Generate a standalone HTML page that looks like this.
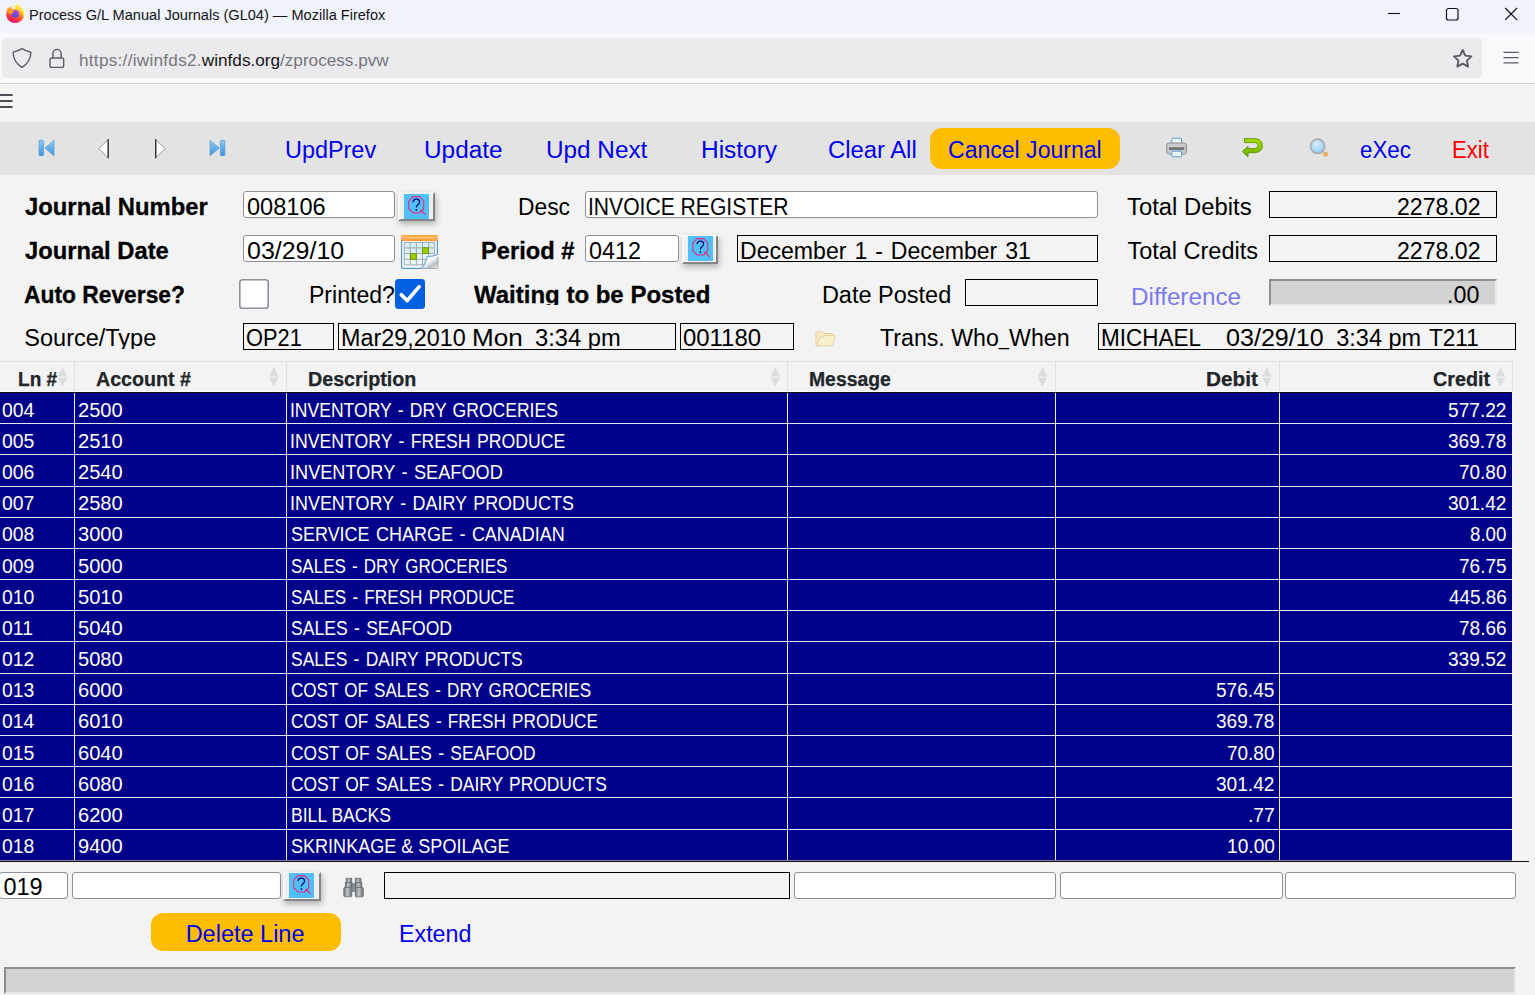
<!DOCTYPE html>
<html lang="en"><head><meta charset="utf-8"><title>Process G/L Manual Journals (GL04)</title>
<style>
*{box-sizing:border-box;margin:0;padding:0}
html,body{width:1535px;height:995px;overflow:hidden;background:#f3f3f3}
body{position:relative;font-family:"Liberation Sans",sans-serif}
.a{position:absolute}
.t{position:absolute;white-space:pre;line-height:1;font-kerning:normal;transform-origin:0 0}
.inp{position:absolute;background:#fff;border:1px solid #8f8f9d;border-radius:3px}
.ro{position:absolute;border:1px solid #000}
.inset{position:absolute;background:#d3d3d3;border:2px solid;border-color:#8e8e8e #e9e9e9 #e9e9e9 #8e8e8e}
.btn{position:absolute;background:#ffbd00;border-radius:12px}
.lk{position:absolute;background:#efefef;border:2px solid;border-color:#f6f6f6 #858585 #858585 #f6f6f6;box-shadow:1px 3px 6px rgba(0,0,0,.28)}
.vl{position:absolute;width:1px}
.hl{position:absolute;height:1px;left:0}
svg{position:absolute;overflow:visible}
</style></head>
<body>
<div class="a" style="left:0px;top:0px;width:1535px;height:33px;background:#f0f3fb"></div>
<div class="a" style="left:0px;top:33px;width:1535px;height:50px;background:#f9f9fb"></div>
<div class="a" style="left:0px;top:83px;width:1535px;height:1px;background:#cfcfd4"></div>
<div class="a" style="left:2px;top:38px;width:1480px;height:40px;background:#ebebed;border-radius:4px"></div>
<div class="a" style="left:0px;top:122px;width:1535px;height:52.5px;background:#e3e3e3"></div>
<div class="btn" style="left:930px;top:128px;width:190px;height:41px;"></div>
<div class="inp" style="left:243px;top:191px;width:152px;height:27px;"></div>
<div class="inp" style="left:585px;top:191px;width:513px;height:27px;"></div>
<div class="ro" style="left:1269px;top:191px;width:228px;height:27px;"></div>
<div class="inp" style="left:243px;top:235px;width:152px;height:27px;"></div>
<div class="inp" style="left:585px;top:235px;width:94px;height:27px;"></div>
<div class="ro" style="left:737px;top:235px;width:361px;height:27px;"></div>
<div class="ro" style="left:1269px;top:235px;width:228px;height:27px;"></div>
<svg style="left:239px;top:279px" width="30" height="30" viewBox="0 0 30 30"><rect x=".8" y=".8" width="28.400" height="28.400" rx="2.800" fill="#fff" stroke="#8f8f9d" stroke-width="1.600"/></svg>
<div class="a" style="left:395px;top:279px;width:30px;height:30px;background:#0060df;border-radius:3.500px"></div>
<div class="ro" style="left:965px;top:279px;width:133px;height:27px;"></div>
<div class="inset" style="left:1269px;top:279px;width:228px;height:27px;"></div>
<div class="ro" style="left:243px;top:323px;width:91px;height:27px;"></div>
<div class="ro" style="left:338px;top:323px;width:338px;height:27px;"></div>
<div class="ro" style="left:680px;top:323px;width:114px;height:27px;"></div>
<div class="ro" style="left:1098px;top:323px;width:418px;height:27px;"></div>
<div class="hl" style="left:0px;top:361px;width:1512px;height:1px;background:#dee2e6"></div>
<div class="vl" style="left:74px;top:361px;width:1px;height:31px;background:#dee2e6"></div>
<div class="vl" style="left:286px;top:361px;width:1px;height:31px;background:#dee2e6"></div>
<div class="vl" style="left:787px;top:361px;width:1px;height:31px;background:#dee2e6"></div>
<div class="vl" style="left:1055px;top:361px;width:1px;height:31px;background:#dee2e6"></div>
<div class="vl" style="left:1279px;top:361px;width:1px;height:31px;background:#dee2e6"></div>
<div class="vl" style="left:1512px;top:361px;width:1px;height:31px;background:#dee2e6"></div>
<div class="a" style="left:0px;top:393px;width:1512px;height:467px;background:#00008b"></div>
<div class="hl" style="left:0px;top:391px;width:1512px;height:1px;background:#fbfbfb"></div>
<div class="hl" style="left:0px;top:392px;width:1512px;height:1px;background:#101010"></div>
<div class="hl" style="left:0px;top:423px;width:1512px;height:1px;background:#e4e4f4"></div>
<div class="hl" style="left:0px;top:454px;width:1512px;height:1px;background:#e4e4f4"></div>
<div class="hl" style="left:0px;top:486px;width:1512px;height:1px;background:#e4e4f4"></div>
<div class="hl" style="left:0px;top:517px;width:1512px;height:1px;background:#e4e4f4"></div>
<div class="hl" style="left:0px;top:548px;width:1512px;height:1px;background:#e4e4f4"></div>
<div class="hl" style="left:0px;top:579px;width:1512px;height:1px;background:#e4e4f4"></div>
<div class="hl" style="left:0px;top:610px;width:1512px;height:1px;background:#e4e4f4"></div>
<div class="hl" style="left:0px;top:641px;width:1512px;height:1px;background:#e4e4f4"></div>
<div class="hl" style="left:0px;top:673px;width:1512px;height:1px;background:#e4e4f4"></div>
<div class="hl" style="left:0px;top:704px;width:1512px;height:1px;background:#e4e4f4"></div>
<div class="hl" style="left:0px;top:735px;width:1512px;height:1px;background:#e4e4f4"></div>
<div class="hl" style="left:0px;top:766px;width:1512px;height:1px;background:#e4e4f4"></div>
<div class="hl" style="left:0px;top:797px;width:1512px;height:1px;background:#e4e4f4"></div>
<div class="hl" style="left:0px;top:829px;width:1512px;height:1px;background:#e4e4f4"></div>
<div class="vl" style="left:74px;top:393px;width:1px;height:467px;background:#eeeef8"></div>
<div class="vl" style="left:286px;top:393px;width:1px;height:467px;background:#eeeef8"></div>
<div class="vl" style="left:787px;top:393px;width:1px;height:467px;background:#eeeef8"></div>
<div class="vl" style="left:1055px;top:393px;width:1px;height:467px;background:#eeeef8"></div>
<div class="vl" style="left:1279px;top:393px;width:1px;height:467px;background:#eeeef8"></div>
<div class="hl" style="left:0px;top:860px;width:1512px;height:1px;background:#7d7da0"></div>
<div class="hl" style="left:0px;top:861px;width:1529px;height:1px;background:#111"></div>
<div class="inp" style="left:-1px;top:872px;width:69px;height:27px;"></div>
<div class="inp" style="left:72px;top:872px;width:209px;height:27px;"></div>
<div class="ro" style="left:384px;top:872px;width:406px;height:27px;"></div>
<div class="inp" style="left:794px;top:872px;width:262px;height:27px;"></div>
<div class="inp" style="left:1060px;top:872px;width:223px;height:27px;"></div>
<div class="inp" style="left:1285px;top:872px;width:231px;height:27px;"></div>
<div class="btn" style="left:151px;top:913px;width:190px;height:38px;"></div>
<div class="inset" style="left:4px;top:967px;width:1512px;height:27px;"></div>
<svg style="left:0px;top:0px" width="1535" height="995" viewBox="0 0 1535 995">
<defs>
<linearGradient id="ffo" x1="0.75" y1="0.050" x2="0.35" y2="1"><stop offset="0" stop-color="#fff04a"/><stop offset="0.30" stop-color="#ffb020"/><stop offset="0.62" stop-color="#ff4f33"/><stop offset="1" stop-color="#e6006c"/></linearGradient>
<linearGradient id="ffp" x1="0.6" y1="0" x2="0.4" y2="1"><stop offset="0" stop-color="#b838ee"/><stop offset="0.5" stop-color="#7a55f0"/><stop offset="1" stop-color="#4840c8"/></linearGradient>
<linearGradient id="nb" x1="0" y1="0" x2="0" y2="1"><stop offset="0" stop-color="#8fc9f2"/><stop offset="1" stop-color="#3f93dc"/></linearGradient>
<linearGradient id="gr" x1="0" y1="0" x2="0" y2="1"><stop offset="0" stop-color="#a6d800"/><stop offset="1" stop-color="#6fae00"/></linearGradient>
<radialGradient id="gl" cx="0.4" cy="0.35" r="0.7"><stop offset="0" stop-color="#d9f0fd"/><stop offset="1" stop-color="#8fcbf2"/></radialGradient>
<linearGradient id="bn" x1="0" y1="0" x2="1" y2="0"><stop offset="0" stop-color="#6d7072"/><stop offset="0.45" stop-color="#c3c6c8"/><stop offset="1" stop-color="#66696b"/></linearGradient>
</defs>
<!-- firefox logo -->
<circle cx="15.100" cy="14.200" r="8.900" fill="url(#ffo)"/>
<path d="M11.300 8.600L12.600 4.600l2.700 1.800v2.800z" fill="#f0f3fb"/>
<path d="M15 8.800c.2-2.300 1.400-4 2.700-5 .9 2.200 3.800 3.400 5.300 6.200 1.300 2.400 1.300 5 .5 7-.5-4-2.500-6.500-5-7.500-1.200-.5-2.500-.7-3.500-.7z" fill="#ffe63c"/>
<path d="M6.700 11.200c.2-2 1-3.300 1.800-3.900.3.800 1 1.400 1.600 1.600.2-.6.700-1 1.200-.9 0 1.100.5 1.900 1.200 2.300L9 12.200z" fill="#ff9d1e"/>
<circle cx="15.200" cy="13.900" r="3.800" fill="url(#ffp)"/>
<path d="M7.800 11.700c2.100-.9 4.700-1 7.100.1-1.400.4-2.600 1-3.400 2.100-1.100-.6-2.600-1.100-3.700-2.200z" fill="#ffae1f"/>
<!-- window controls -->
<path d="M1388 13.500h12" stroke="#111" stroke-width="1.100" fill="none"/>
<rect x="1446.500" y="8.500" width="11.500" height="11.500" rx="2" fill="none" stroke="#111" stroke-width="1.200"/>
<path d="M1505.200 8l11.800 11.800M1517 8l-11.800 11.800" stroke="#111" stroke-width="1.200" fill="none"/>
<!-- shield -->
<path d="M22 48.700c2.600 1.700 5.400 2.800 8.400 3.300.3 0 .5.300.5.600-.2 6.600-3.400 11.600-8.900 14.700-5.500-3.100-8.700-8.100-8.900-14.700 0-.3.200-.6.500-.6 3-.5 5.800-1.600 8.400-3.300z" fill="none" stroke="#5b5b66" stroke-width="1.400" stroke-linejoin="round"/>
<!-- lock -->
<rect x="50" y="58" width="13.700" height="9.400" rx="2" fill="none" stroke="#5b5b66" stroke-width="1.400"/>
<path d="M52.900 58v-4.300a4.100 4.300 0 0 1 8.200 0V58" fill="none" stroke="#5b5b66" stroke-width="1.400"/>
<!-- star -->
<path d="M1462.700 50l2.600 5.600 6.100.8-4.500 4.200 1.200 6-5.400-3-5.400 3 1.200-6-4.500-4.200 6.100-.8z" fill="none" stroke="#5b5b66" stroke-width="1.900" stroke-linejoin="round"/>
<!-- hamburger (browser) -->
<path d="M1503.500 52.400h15.200M1503.500 57.600h15.200M1503.500 62.800h15.200" stroke="#5b5b66" stroke-width="1.300" fill="none"/>
<!-- page hamburger -->
<path d="M0 95h12.600M0 101h12.600M0 107.100h12.600" stroke="#15151f" stroke-width="1.500" fill="none"/>
<!-- nav: first -->
<rect x="39" y="140.300" width="4.600" height="15.400" rx="1" fill="url(#nb)" stroke="#4a97d8" stroke-width=".6"/>
<path d="M54 140.300v15.400l-9-7.700z" fill="url(#nb)" stroke="#4a97d8" stroke-width=".6" stroke-linejoin="round"/>
<!-- nav: prev -->
<path d="M108 139.800v17.800l-9.300-8.900z" fill="#fdfdfd" stroke="#8e8e8e" stroke-width=".9" stroke-linejoin="round"/>
<path d="M108.200 139.600v18.200" stroke="#262626" stroke-width="1.200" fill="none" stroke-linecap="round"/>
<!-- nav: next -->
<path d="M155.900 139.800v17.800l9.300-8.900z" fill="#fdfdfd" stroke="#8e8e8e" stroke-width=".9" stroke-linejoin="round"/>
<path d="M155.700 139.600v18.200" stroke="#262626" stroke-width="1.200" fill="none" stroke-linecap="round"/>
<!-- nav: last -->
<path d="M210 140.300v15.400l9.300-7.700z" fill="url(#nb)" stroke="#4a97d8" stroke-width=".6" stroke-linejoin="round"/>
<rect x="220.300" y="140.300" width="4.600" height="15.400" rx="1" fill="url(#nb)" stroke="#4a97d8" stroke-width=".6"/>
<!-- printer -->
<rect x="1171.800" y="138.200" width="9.800" height="6" rx=".8" fill="#eef6fd" stroke="#5b9bd8" stroke-width="1"/>
<rect x="1166.800" y="143" width="19.600" height="11" rx="2" fill="#c9cbcd" stroke="#8b8e91" stroke-width="1"/>
<rect x="1169" y="147.300" width="15.200" height="2.600" fill="#6e7275"/>
<rect x="1171.800" y="151.200" width="9.800" height="5.600" rx=".8" fill="#eef6fd" stroke="#5b9bd8" stroke-width="1"/>
<!-- green return arrow -->
<path d="M1244.500 138.600h10c4.600 0 8 2.900 8 7 0 4.200-3.400 7.100-8 7.100h-6.500v4.200l-5.700-5.400 5.700-5.200v2.200h6.300c2.200 0 3.700-1.200 3.700-3s-1.500-2.900-3.700-2.900h-9.800z" fill="url(#gr)" stroke="#5d9700" stroke-width=".9" stroke-linejoin="round"/>
<!-- magnifier -->
<path d="M1322.800 151.400l2.600 2.600" stroke="#c9ccd0" stroke-width="2.600" stroke-linecap="round"/><circle cx="1325.700" cy="154.300" r="2" fill="#f0b253" stroke="#d99a3c" stroke-width=".5"/>
<circle cx="1317.600" cy="146.300" r="7.100" fill="url(#gl)" stroke="#a9adb2" stroke-width="1.700"/>
<!-- folder (faded) -->
<g opacity=".62"><path d="M816 345.800v-13c0-.6.400-1 1-1h5.200l1.400 1.700h8.200c.6 0 1 .4 1 1v2.300" fill="#fbe9a8" stroke="#e2b86c" stroke-width="1"/>
<path d="M816.300 345.800l3.600-8.600h3.400l1.300-1.600h9.600c.7 0 1.100.6.900 1.200l-2.600 8.200c-.1.500-.5.800-1 .8z" fill="#fdf0b4" stroke="#e2b86c" stroke-width="1" stroke-linejoin="round"/></g>
<!-- binoculars -->
<g stroke="#6a6d6f" stroke-width=".8">
<rect x="346.200" y="878.300" width="5.600" height="4.600" fill="url(#bn)"/><rect x="345.300" y="882.600" width="6.500" height="5" fill="url(#bn)"/><rect x="343.800" y="887.400" width="8" height="9.400" rx="1" fill="url(#bn)"/>
<rect x="355.300" y="878.300" width="5.600" height="4.600" fill="url(#bn)"/><rect x="355.300" y="882.600" width="6.500" height="5" fill="url(#bn)"/><rect x="355.300" y="887.400" width="8" height="9.400" rx="1" fill="url(#bn)"/>
<rect x="351.800" y="883.800" width="3.500" height="7.400" fill="#8a8d8f"/>
</g>
<!-- checkbox tick -->
<path d="M401.300 294.700l5.900 5.900 12-14" fill="none" stroke="#fff" stroke-width="3.700" stroke-linecap="round" stroke-linejoin="round"/>
<path d="M57.7 376.400l4.800-9.400 4.800 9.400zM57.7 377.800l4.800 8.800 4.800-8.800z" fill="#dcdcdc"/>
<path d="M268.95 376.400l4.800-9.400 4.800 9.400zM268.95 377.800l4.800 8.800 4.800-8.800z" fill="#dcdcdc"/>
<path d="M770.45 376.400l4.800-9.400 4.800 9.400zM770.45 377.800l4.800 8.800 4.800-8.800z" fill="#dcdcdc"/>
<path d="M1037.7 376.400l4.800-9.400 4.800 9.400zM1037.7 377.800l4.800 8.800 4.800-8.800z" fill="#dcdcdc"/>
<path d="M1262.2 376.400l4.800-9.400 4.800 9.400zM1262.2 377.800l4.800 8.800 4.800-8.800z" fill="#dcdcdc"/>
<path d="M1495.7 376.400l4.800-9.400 4.800 9.400zM1495.7 377.800l4.800 8.800 4.800-8.800z" fill="#dcdcdc"/>
</svg>
<div class="lk" style="left:398px;top:192px;width:37px;height:29px"></div>
<svg style="left:404px;top:193.6px" width="25" height="25" viewBox="0 0 25 25"><rect width="25" height="25" fill="#50c0f8"/><path d="M9 2.600h6.400l4.300 4.300v7.800l-4.300 4.300H9l-4.200-4.300V6.900z" fill="none" stroke="#e8287e" stroke-width="1.100"/><path d="M17.600 17.200l4 3.600" stroke="#e8287e" stroke-width="1.200"/><circle cx="17.400" cy="16.900" r="1.100" fill="#e8287e"/><path d="M9.100 8.300c0-2 1.400-3.200 3.300-3.200s3.200 1.100 3.200 2.800c0 1.500-.9 2.200-1.900 3-.9.700-1.400 1.300-1.400 2.700" fill="none" stroke="#06067c" stroke-width="1.300"/><rect x="11.600" y="15.300" width="1.500" height="1.600" fill="#06067c"/></svg>
<div class="lk" style="left:682px;top:234.5px;width:36px;height:29.0px"></div>
<svg style="left:688px;top:236.2px" width="25" height="25" viewBox="0 0 25 25"><rect width="25" height="25" fill="#50c0f8"/><path d="M9 2.600h6.400l4.300 4.300v7.800l-4.300 4.300H9l-4.200-4.300V6.900z" fill="none" stroke="#e8287e" stroke-width="1.100"/><path d="M17.600 17.200l4 3.600" stroke="#e8287e" stroke-width="1.200"/><circle cx="17.400" cy="16.900" r="1.100" fill="#e8287e"/><path d="M9.100 8.300c0-2 1.400-3.200 3.300-3.200s3.200 1.100 3.200 2.800c0 1.500-.9 2.200-1.900 3-.9.700-1.400 1.300-1.400 2.700" fill="none" stroke="#06067c" stroke-width="1.300"/><rect x="11.600" y="15.300" width="1.500" height="1.600" fill="#06067c"/></svg>
<div class="lk" style="left:283px;top:871.5px;width:37.5px;height:29.0px"></div>
<svg style="left:288.8px;top:873px" width="25" height="25" viewBox="0 0 25 25"><rect width="25" height="25" fill="#50c0f8"/><path d="M9 2.600h6.400l4.300 4.300v7.800l-4.300 4.300H9l-4.200-4.300V6.900z" fill="none" stroke="#e8287e" stroke-width="1.100"/><path d="M17.600 17.200l4 3.600" stroke="#e8287e" stroke-width="1.200"/><circle cx="17.400" cy="16.900" r="1.100" fill="#e8287e"/><path d="M9.100 8.300c0-2 1.400-3.200 3.300-3.200s3.200 1.100 3.200 2.800c0 1.500-.9 2.200-1.900 3-.9.700-1.400 1.300-1.400 2.700" fill="none" stroke="#06067c" stroke-width="1.300"/><rect x="11.600" y="15.300" width="1.500" height="1.600" fill="#06067c"/></svg>
<svg style="left:401px;top:235px" width="37" height="34" viewBox="0 0 37 34"><defs><linearGradient id="co" x1="0" y1="0" x2="0" y2="1"><stop offset="0" stop-color="#ff9a22"/><stop offset="0.35" stop-color="#ffc27a"/><stop offset="1" stop-color="#ff9320"/></linearGradient><linearGradient id="cc" x1="0.25" y1="0.1" x2="0.9" y2="0.95"><stop offset="0" stop-color="#ffffff"/><stop offset="0.45" stop-color="#f4f6f8"/><stop offset="0.75" stop-color="#b9bdc1"/><stop offset="1" stop-color="#e4e6e8"/></linearGradient></defs><rect x=".6" y="2" width="35.800" height="31.400" rx="1.800" fill="#fff" stroke="#4f9ad0" stroke-width="1.200"/><rect x="0" y="0" width="37" height="6" rx="1.400" fill="url(#co)"/><rect x="3.200" y="7.400" width="30.500" height="22.500" fill="#d6efff"/><rect x="3.200" y="18.600" width="30.500" height="11.300" fill="#e9f7ff"/><path d="M3.200 7.400h30.500v22.500H3.200zM3.200 12.900h30.500M3.200 18.600h30.500M3.200 24.300h30.500M9.200 7.400v22.500M15.400 7.400v22.500M21.500 7.400v22.500M27.700 7.400v22.500" fill="none" stroke="#a3a6aa" stroke-width="1"/><rect x="21.600" y="12.700" width="5.800" height="5.800" fill="#9ccc00" stroke="#6c9c00" stroke-width=".9"/><rect x="9.500" y="18.600" width="5.800" height="5.800" fill="#9ccc00" stroke="#6c9c00" stroke-width=".9"/><path d="M37 19c-3.500 2.600-7.500 2.400-10.800 2.600-1.200 4.500-2.600 9-6 12.100h15.300a1.500 1.500 0 0 0 1.500-1.500z" fill="url(#cc)"/><path d="M37 19c-3.500 2.600-7.500 2.400-10.800 2.600-1.200 4.500-2.600 9-6 12.100" fill="none" stroke="#6fa8d8" stroke-width="1.100"/><path d="M22 33.500h13.500a1.500 1.500 0 0 0 1.500-1.500v-10" fill="none" stroke="#a9a9a9" stroke-width="1"/></svg>
<span class="t" style="left:29.02px;top:6.66px;font-size:15.4px;color:#15141a;transform:scaleX(0.9460);">Process G/L Manual Journals (GL04) — Mozilla Firefox</span>
<span class="t" style="left:78.74px;top:52.07px;font-size:17.4px;color:#76767e;transform:scaleX(0.9859);"><span style="letter-spacing:.28px">https://iwinfds2.</span><span style="color:#15141a">winfds.org</span>/zprocess.pvw</span>
<span class="t" style="left:285.06px;top:139.11px;font-size:23.5px;color:#0000ee;transform:scaleX(0.9964);">UpdPrev</span>
<span class="t" style="left:424.23px;top:139.11px;font-size:23.5px;color:#0000ee;transform:scaleX(1.0364);">Update</span>
<span class="t" style="left:546.14px;top:139.11px;font-size:23.5px;color:#0000ee;transform:scaleX(1.0345);">Upd Next</span>
<span class="t" style="left:701.17px;top:139.11px;font-size:23.5px;color:#0000ee;transform:scaleX(1.0402);">History</span>
<span class="t" style="left:827.97px;top:139.11px;font-size:23.5px;color:#0000ee;transform:scaleX(1.0133);">Clear All</span>
<span class="t" style="left:947.90px;top:139.11px;font-size:23.5px;color:#0000ee;transform:scaleX(0.9803);">Cancel Journal</span>
<span class="t" style="left:1360.27px;top:139.11px;font-size:23.5px;color:#0000ee;transform:scaleX(0.9510);">eXec</span>
<span class="t" style="left:1451.97px;top:139.11px;font-size:23.5px;color:#ff0000;transform:scaleX(0.9389);">Exit</span>
<span class="t" style="left:25.00px;top:196.06px;font-size:23.5px;color:#000;font-weight:700;-webkit-text-stroke:0.3px;transform:scaleX(1.0140);">Journal Number</span>
<span class="t" style="left:246.95px;top:195.61px;font-size:23.5px;color:#000;transform:scaleX(1.0029);">008106</span>
<span class="t" style="left:518.03px;top:195.61px;font-size:23.5px;color:#000;transform:scaleX(0.9709);">Desc</span>
<span class="t" style="left:588.37px;top:195.61px;font-size:23.5px;color:#000;transform:scaleX(0.8978);">INVOICE REGISTER</span>
<span class="t" style="left:1127.44px;top:195.61px;font-size:23.5px;color:#000;transform:scaleX(1.0148);">Total Debits</span>
<span class="t" style="left:1397.18px;top:195.61px;font-size:23.5px;color:#000;transform:scaleX(0.9829);">2278.02</span>
<span class="t" style="left:25.03px;top:240.06px;font-size:23.5px;color:#000;font-weight:700;-webkit-text-stroke:0.3px;transform:scaleX(1.0099);">Journal Date</span>
<span class="t" style="left:246.60px;top:239.61px;font-size:23.5px;color:#000;transform:scaleX(1.0630);">03/29/10</span>
<span class="t" style="left:480.66px;top:240.06px;font-size:23.5px;color:#000;font-weight:700;-webkit-text-stroke:0.3px;transform:scaleX(1.0065);">Period #</span>
<span class="t" style="left:588.69px;top:239.61px;font-size:23.5px;color:#000;transform:scaleX(0.9930);">0412</span>
<span class="t" style="left:739.76px;top:239.61px;font-size:23.5px;color:#000;transform:scaleX(0.9816);word-spacing:1.6px;">December 1 - December 31</span>
<span class="t" style="left:1127.42px;top:239.61px;font-size:23.5px;color:#000;">Total Credits</span>
<span class="t" style="left:1397.18px;top:239.61px;font-size:23.5px;color:#000;transform:scaleX(0.9829);">2278.02</span>
<span class="t" style="left:24.48px;top:284.06px;font-size:23.5px;color:#000;font-weight:700;-webkit-text-stroke:0.3px;transform:scaleX(0.9707);">Auto Reverse?</span>
<span class="t" style="left:309.26px;top:283.61px;font-size:23.5px;color:#000;transform:scaleX(0.9807);">Printed?</span>
<span class="t" style="left:473.80px;top:284.06px;font-size:23.5px;color:#000;font-weight:700;-webkit-text-stroke:0.3px;transform:scaleX(1.0210);height:21.24px;overflow:hidden;">Waiting to be Posted</span>
<span class="t" style="left:821.90px;top:283.61px;font-size:23.5px;color:#000;">Date Posted</span>
<span class="t" style="left:1131.17px;top:285.61px;font-size:23.5px;color:#7b7bee;transform:scaleX(1.0308);">Difference</span>
<span class="t" style="left:1446.51px;top:283.61px;font-size:23.5px;color:#000;transform:scaleX(0.9891);">.00</span>
<span class="t" style="left:24.33px;top:327.11px;font-size:23.5px;color:#000;height:22.19px;overflow:hidden;">Source/Type</span>
<span class="t" style="left:246.28px;top:327.11px;font-size:23.5px;color:#000;transform:scaleX(0.9279);">OP21</span>
<span class="t" style="left:341.07px;top:327.11px;font-size:23.5px;color:#000;transform:scaleX(0.9942);">Mar29,2010</span>
<span class="t" style="left:471.81px;top:327.11px;font-size:23.5px;color:#000;transform:scaleX(1.1099);">Mon</span>
<span class="t" style="left:535.47px;top:327.11px;font-size:23.5px;color:#000;transform:scaleX(1.0100);height:22.19px;overflow:hidden;">3:34 pm</span>
<span class="t" style="left:683.20px;top:327.11px;font-size:23.5px;color:#000;transform:scaleX(1.0173);">001180</span>
<span class="t" style="left:880.44px;top:327.11px;font-size:23.5px;color:#000;transform:scaleX(0.9855);">Trans. Who<span style="font-size:18.600px;position:relative;top:-.8px">_</span>When</span>
<span class="t" style="left:1101.37px;top:327.11px;font-size:23.5px;color:#000;transform:scaleX(0.9563);">MICHAEL</span>
<span class="t" style="left:1226.12px;top:327.11px;font-size:23.5px;color:#000;transform:scaleX(1.0676);">03/29/10</span>
<span class="t" style="left:1336.24px;top:327.11px;font-size:23.5px;color:#000;height:22.19px;overflow:hidden;">3:34 pm</span>
<span class="t" style="left:1428.57px;top:327.11px;font-size:23.5px;color:#000;transform:scaleX(0.9592);">T211</span>
<span class="t" style="left:18.21px;top:369.97px;font-size:19.5px;color:#212529;font-weight:700;-webkit-text-stroke:0.25px;transform:scaleX(0.9763);">Ln #</span>
<span class="t" style="left:96.00px;top:369.97px;font-size:19.5px;color:#212529;font-weight:700;-webkit-text-stroke:0.25px;transform:scaleX(1.0065);">Account #</span>
<span class="t" style="left:307.96px;top:369.97px;font-size:19.5px;color:#212529;font-weight:700;-webkit-text-stroke:0.25px;transform:scaleX(1.0085);">Description</span>
<span class="t" style="left:809.19px;top:369.97px;font-size:19.5px;color:#212529;font-weight:700;-webkit-text-stroke:0.25px;transform:scaleX(0.9923);">Message</span>
<span class="t" style="left:1206.30px;top:369.97px;font-size:19.5px;color:#212529;font-weight:700;-webkit-text-stroke:0.25px;transform:scaleX(1.0655);">Debit</span>
<span class="t" style="left:1433.08px;top:369.97px;font-size:19.5px;color:#212529;font-weight:700;-webkit-text-stroke:0.25px;transform:scaleX(1.0119);">Credit</span>
<span class="t" style="left:3.38px;top:875.61px;font-size:23.5px;color:#000;">019</span>
<span class="t" style="left:185.63px;top:923.11px;font-size:23.5px;color:#0000ee;">Delete Line</span>
<span class="t" style="left:399.25px;top:923.11px;font-size:23.5px;color:#0000ee;transform:scaleX(0.9891);">Extend</span>
<span class="t" style="left:2.06px;top:401.19px;font-size:19.5px;color:#fff;transform:scaleX(0.9946);">004</span>
<span class="t" style="left:78.05px;top:401.19px;font-size:19.5px;color:#fff;transform:scaleX(1.0306);">2500</span>
<span class="t" style="left:289.96px;top:401.19px;font-size:19.5px;color:#fff;transform:scaleX(0.8997);word-spacing:1.6px;">INVENTORY - DRY GROCERIES</span>
<span class="t" style="left:1448.45px;top:401.19px;font-size:19.5px;color:#fff;transform:scaleX(0.9800);">577.22</span>
<span class="t" style="left:2.06px;top:432.19px;font-size:19.5px;color:#fff;transform:scaleX(0.9946);">005</span>
<span class="t" style="left:78.05px;top:432.19px;font-size:19.5px;color:#fff;transform:scaleX(1.0306);">2510</span>
<span class="t" style="left:290.05px;top:432.19px;font-size:19.5px;color:#fff;transform:scaleX(0.9060);word-spacing:1.6px;">INVENTORY - FRESH PRODUCE</span>
<span class="t" style="left:1448.37px;top:432.19px;font-size:19.5px;color:#fff;transform:scaleX(0.9777);">369.78</span>
<span class="t" style="left:2.06px;top:463.19px;font-size:19.5px;color:#fff;transform:scaleX(0.9946);">006</span>
<span class="t" style="left:78.05px;top:463.19px;font-size:19.5px;color:#fff;transform:scaleX(1.0306);">2540</span>
<span class="t" style="left:290.00px;top:463.19px;font-size:19.5px;color:#fff;transform:scaleX(0.9308);word-spacing:1.6px;">INVENTORY - SEAFOOD</span>
<span class="t" style="left:1459.32px;top:463.19px;font-size:19.5px;color:#fff;transform:scaleX(0.9719);">70.80</span>
<span class="t" style="left:2.06px;top:494.19px;font-size:19.5px;color:#fff;transform:scaleX(0.9946);">007</span>
<span class="t" style="left:78.05px;top:494.19px;font-size:19.5px;color:#fff;transform:scaleX(1.0306);">2580</span>
<span class="t" style="left:290.04px;top:494.19px;font-size:19.5px;color:#fff;transform:scaleX(0.9199);word-spacing:1.6px;">INVENTORY - DAIRY PRODUCTS</span>
<span class="t" style="left:1448.37px;top:494.19px;font-size:19.5px;color:#fff;transform:scaleX(0.9795);">301.42</span>
<span class="t" style="left:2.06px;top:525.19px;font-size:19.5px;color:#fff;transform:scaleX(0.9946);">008</span>
<span class="t" style="left:78.05px;top:525.19px;font-size:19.5px;color:#fff;transform:scaleX(1.0306);">3000</span>
<span class="t" style="left:291.33px;top:525.19px;font-size:19.5px;color:#fff;transform:scaleX(0.9218);word-spacing:1.6px;">SERVICE CHARGE - CANADIAN</span>
<span class="t" style="left:1470.48px;top:525.19px;font-size:19.5px;color:#fff;transform:scaleX(0.9599);">8.00</span>
<span class="t" style="left:2.06px;top:557.19px;font-size:19.5px;color:#fff;transform:scaleX(0.9946);">009</span>
<span class="t" style="left:78.05px;top:557.19px;font-size:19.5px;color:#fff;transform:scaleX(1.0306);">5000</span>
<span class="t" style="left:290.56px;top:557.19px;font-size:19.5px;color:#fff;transform:scaleX(0.8732);word-spacing:1.6px;">SALES - DRY GROCERIES</span>
<span class="t" style="left:1458.64px;top:557.19px;font-size:19.5px;color:#fff;transform:scaleX(0.9754);">76.75</span>
<span class="t" style="left:2.06px;top:588.19px;font-size:19.5px;color:#fff;transform:scaleX(0.9946);">010</span>
<span class="t" style="left:78.05px;top:588.19px;font-size:19.5px;color:#fff;transform:scaleX(1.0306);">5010</span>
<span class="t" style="left:290.54px;top:588.19px;font-size:19.5px;color:#fff;transform:scaleX(0.8796);word-spacing:1.6px;">SALES - FRESH PRODUCE</span>
<span class="t" style="left:1448.64px;top:588.19px;font-size:19.5px;color:#fff;transform:scaleX(0.9688);">445.86</span>
<span class="t" style="left:2.06px;top:619.19px;font-size:19.5px;color:#fff;transform:scaleX(0.9946);">011</span>
<span class="t" style="left:78.05px;top:619.19px;font-size:19.5px;color:#fff;transform:scaleX(1.0306);">5040</span>
<span class="t" style="left:291.08px;top:619.19px;font-size:19.5px;color:#fff;transform:scaleX(0.9009);word-spacing:1.6px;">SALES - SEAFOOD</span>
<span class="t" style="left:1459.40px;top:619.19px;font-size:19.5px;color:#fff;transform:scaleX(0.9769);">78.66</span>
<span class="t" style="left:2.06px;top:650.19px;font-size:19.5px;color:#fff;transform:scaleX(0.9946);">012</span>
<span class="t" style="left:78.05px;top:650.19px;font-size:19.5px;color:#fff;transform:scaleX(1.0306);">5080</span>
<span class="t" style="left:291.00px;top:650.19px;font-size:19.5px;color:#fff;transform:scaleX(0.8956);word-spacing:1.6px;">SALES - DAIRY PRODUCTS</span>
<span class="t" style="left:1448.37px;top:650.19px;font-size:19.5px;color:#fff;transform:scaleX(0.9795);">339.52</span>
<span class="t" style="left:2.06px;top:681.19px;font-size:19.5px;color:#fff;transform:scaleX(0.9946);">013</span>
<span class="t" style="left:78.05px;top:681.19px;font-size:19.5px;color:#fff;transform:scaleX(1.0306);">6000</span>
<span class="t" style="left:291.39px;top:681.19px;font-size:19.5px;color:#fff;transform:scaleX(0.8751);word-spacing:1.6px;">COST OF SALES - DRY GROCERIES</span>
<span class="t" style="left:1215.92px;top:681.19px;font-size:19.5px;color:#fff;transform:scaleX(0.9787);">576.45</span>
<span class="t" style="left:2.06px;top:712.19px;font-size:19.5px;color:#fff;transform:scaleX(0.9946);">014</span>
<span class="t" style="left:78.05px;top:712.19px;font-size:19.5px;color:#fff;transform:scaleX(1.0306);">6010</span>
<span class="t" style="left:290.78px;top:712.19px;font-size:19.5px;color:#fff;transform:scaleX(0.8794);word-spacing:1.6px;">COST OF SALES - FRESH PRODUCE</span>
<span class="t" style="left:1216.37px;top:712.19px;font-size:19.5px;color:#fff;transform:scaleX(0.9777);">369.78</span>
<span class="t" style="left:2.06px;top:744.19px;font-size:19.5px;color:#fff;transform:scaleX(0.9946);">015</span>
<span class="t" style="left:78.05px;top:744.19px;font-size:19.5px;color:#fff;transform:scaleX(1.0306);">6040</span>
<span class="t" style="left:291.39px;top:744.19px;font-size:19.5px;color:#fff;transform:scaleX(0.8934);word-spacing:1.6px;">COST OF SALES - SEAFOOD</span>
<span class="t" style="left:1227.32px;top:744.19px;font-size:19.5px;color:#fff;transform:scaleX(0.9719);">70.80</span>
<span class="t" style="left:2.06px;top:775.19px;font-size:19.5px;color:#fff;transform:scaleX(0.9946);">016</span>
<span class="t" style="left:78.05px;top:775.19px;font-size:19.5px;color:#fff;transform:scaleX(1.0306);">6080</span>
<span class="t" style="left:291.39px;top:775.19px;font-size:19.5px;color:#fff;transform:scaleX(0.8928);word-spacing:1.6px;">COST OF SALES - DAIRY PRODUCTS</span>
<span class="t" style="left:1216.37px;top:775.19px;font-size:19.5px;color:#fff;transform:scaleX(0.9795);">301.42</span>
<span class="t" style="left:2.06px;top:806.19px;font-size:19.5px;color:#fff;transform:scaleX(0.9946);">017</span>
<span class="t" style="left:78.05px;top:806.19px;font-size:19.5px;color:#fff;transform:scaleX(1.0306);">6200</span>
<span class="t" style="left:290.64px;top:806.19px;font-size:19.5px;color:#fff;transform:scaleX(0.9013);">BILL BACKS</span>
<span class="t" style="left:1247.50px;top:806.19px;font-size:19.5px;color:#fff;transform:scaleX(0.9901);">.77</span>
<span class="t" style="left:2.06px;top:837.19px;font-size:19.5px;color:#fff;transform:scaleX(0.9946);">018</span>
<span class="t" style="left:78.05px;top:837.19px;font-size:19.5px;color:#fff;transform:scaleX(1.0306);">9400</span>
<span class="t" style="left:291.27px;top:837.19px;font-size:19.5px;color:#fff;transform:scaleX(0.9251);">SKRINKAGE &amp; SPOILAGE</span>
<span class="t" style="left:1227.04px;top:837.19px;font-size:19.5px;color:#fff;transform:scaleX(0.9832);">10.00</span>
</body></html>
